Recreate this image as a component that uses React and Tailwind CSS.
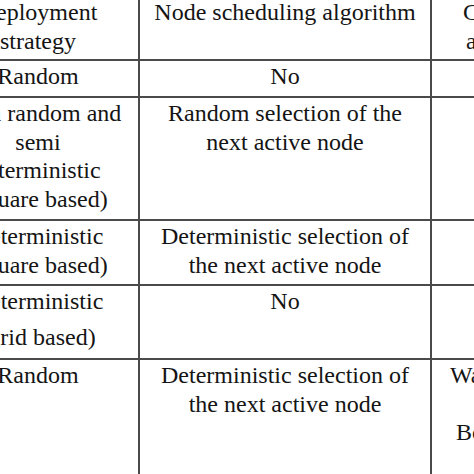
const rows = [
  {
    h: 'h-[64px]',
    c1: ['Deployment', 'strategy'],
    c2: ['Node scheduling algorithm'],
    c3: [['Coverage', 'pl-[31px]'], ['algorithm', 'pl-[34px]']],
  },
  { h: 'h-[37px]', c1: ['Random'], c2: ['No'], c3: [] },
  {
    h: 'h-[123px]',
    c1: ['Both random and', 'semi', 'deterministic', '(square based)'],
    c2: ['Random selection of the', 'next active node'],
    c3: [],
  },
  {
    h: 'h-[65px]',
    c1: ['Deterministic', '(square based)'],
    c2: ['Deterministic selection of', 'the next active node'],
    c3: [],
  },
  { h: 'h-[74px]', c1: ['Deterministic', '(grid based)'], c2: ['No'], c3: [], spaced: true },
  {
    h: 'h-[130px]',
    c1: ['Random'],
    c2: ['Deterministic selection of', 'the next active node'],
    c3: [['Watershed', 'pl-[18px]'], ['based', 'pl-[60px]'], ['Boundary', 'pl-[24px]']],
  },
];

const cell = "border-2 border-[#4a4a4a] align-top pt-[1px] px-0 whitespace-nowrap";

export default function App() {
  return (
    <div className="w-[474px] h-[474px] overflow-hidden bg-white text-[#141414] font-['Liberation_Serif','Times_New_Roman',serif]">
      <table className="table-fixed border-collapse w-[734px] -ml-[64px] -mt-[5px] text-[24px] leading-[28.5px]">
        <colgroup>
          <col className="w-[202px]" />
          <col className="w-[292px]" />
          <col className="w-[240px]" />
        </colgroup>
        <tbody>
          {rows.map((row, i) => (
            <tr key={i} className={row.h}>
              <td className={`${cell} text-center`}>
                {row.c1.map((t, j) => (
                  <div key={j} className={row.spaced && j > 0 ? 'mt-[7px]' : ''}>{t}</div>
                ))}
              </td>
              <td className={`${cell} text-center`}>
                {row.c2.map((t, j) => (
                  <div key={j}>{t}</div>
                ))}
              </td>
              <td className={`${cell} text-left`}>
                {row.c3.map(([t, pad], j) => (
                  <div key={j} className={pad}>{t}</div>
                ))}
              </td>
            </tr>
          ))}
        </tbody>
      </table>
    </div>
  );
}
